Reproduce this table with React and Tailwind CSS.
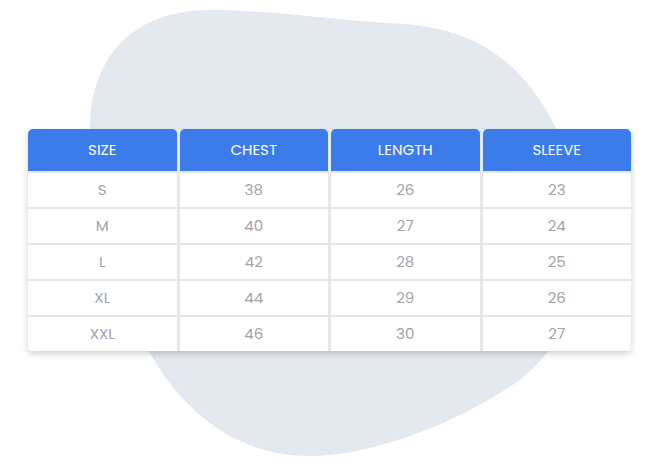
export default function App() {
  const rows = [
    ["S", "38", "26", "23"],
    ["M", "40", "27", "24"],
    ["L", "42", "28", "25"],
    ["XL", "44", "29", "26"],
    ["XXL", "46", "30", "27"],
  ];
  const heads = ["SIZE", "CHEST", "LENGTH", "SLEEVE"];
  return (
    <div
      className="relative w-[660px] h-[467px] bg-white overflow-hidden"
      style={{ fontFamily: 'Poppins, "Open Sans", "Noto Sans", sans-serif' }}
    >
      <svg className="absolute left-0 top-0" width="660" height="467" viewBox="0 0 660 467">
        <path
          d="M 90 130 C 90 55, 135 10, 210 10 C 275 10, 330 20, 405 24 C 480 30, 535 65, 572 165 C 600 240, 592 320, 520 380 C 455 425, 370 456, 310 456 C 230 456, 165 405, 125 300 C 100 235, 90 185, 90 130 Z"
          fill="#e4e9f0"
        />
      </svg>
      <div className="relative pt-[129px] pl-[28px]">
        <div className="w-[603px] rounded-b-[4px] shadow-[0_3px_6px_rgba(0,0,0,0.18)]">
          <div className="grid grid-cols-4 gap-x-[3px]">
            {heads.map((h) => (
              <div
                key={h}
                className="h-[42px] rounded-t-[5px] bg-[#3b7cea] text-white text-[15px] flex items-center justify-center"
              >
                {h}
              </div>
            ))}
          </div>
          <div className="grid grid-cols-4 gap-x-[3px] gap-y-[2px] pt-[2px] bg-[#e6e6e8] rounded-b-[4px] overflow-hidden">
            {rows.flat().map((c, i) => (
              <div
                key={i}
                className="h-[34px] bg-white text-[#a2a2aa] text-[15px] flex items-center justify-center"
              >
                {c}
              </div>
            ))}
          </div>
        </div>
      </div>
    </div>
  );
}
